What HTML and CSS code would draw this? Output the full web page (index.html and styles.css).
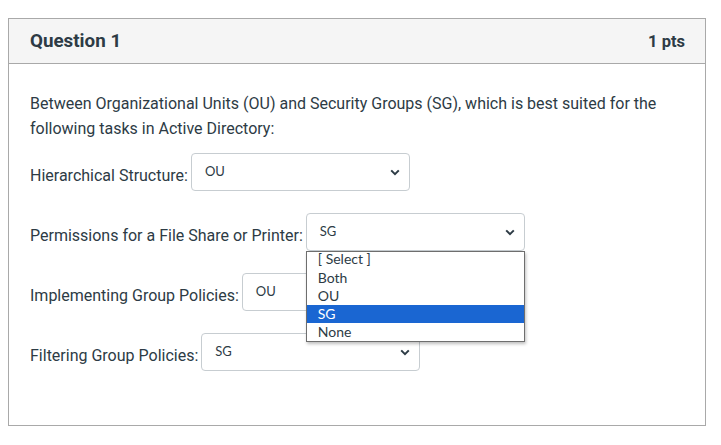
FILE: index.html
```html
<!DOCTYPE html>
<html lang="en">
<head>
<meta charset="utf-8">
<title>Question 1</title>
<link rel="stylesheet" href="styles.css">
</head>
<body>
<div class="card">
  <div class="card-header">
    <span class="title">Question 1</span>
    <span class="pts">1 pts</span>
  </div>
  <div class="card-body">
    <p class="prompt">Between Organizational Units (OU) and Security Groups (SG), which is best suited for the following tasks in Active Directory:</p>
    <div class="row">
      <span class="label">Hierarchical Structure:</span>
      <div class="select"><span class="value">OU</span><svg class="chev" width="10" height="7" viewBox="0 0 10 7"><path d="M1.2 1.4 L5 5.2 L8.8 1.4" fill="none" stroke="#2d3b45" stroke-width="2"/></svg></div>
    </div>
    <div class="row">
      <span class="label">Permissions for a File Share or Printer:</span>
      <div class="select-wrap">
        <div class="select"><span class="value">SG</span><svg class="chev" width="10" height="7" viewBox="0 0 10 7"><path d="M1.2 1.4 L5 5.2 L8.8 1.4" fill="none" stroke="#2d3b45" stroke-width="2"/></svg></div>
        <ul class="listbox">
          <li class="opt first">[ Select ]</li>
          <li class="opt">Both</li>
          <li class="opt">OU</li>
          <li class="opt selected">SG</li>
          <li class="opt">None</li>
        </ul>
      </div>
    </div>
    <div class="row">
      <span class="label">Implementing Group Policies:</span>
      <div class="select"><span class="value">OU</span><svg class="chev" width="10" height="7" viewBox="0 0 10 7"><path d="M1.2 1.4 L5 5.2 L8.8 1.4" fill="none" stroke="#2d3b45" stroke-width="2"/></svg></div>
    </div>
    <div class="row">
      <span class="label">Filtering Group Policies:</span>
      <div class="select"><span class="value">SG</span><svg class="chev" width="10" height="7" viewBox="0 0 10 7"><path d="M1.2 1.4 L5 5.2 L8.8 1.4" fill="none" stroke="#2d3b45" stroke-width="2"/></svg></div>
    </div>
  </div>
</div>
</body>
</html>
```
FILE: styles.css
```css
html, body {
  margin: 0;
  padding: 0;
  background: #ffffff;
}
body {
  padding: 18px 0 0 8px;
  font-family: Roboto, "Liberation Sans", sans-serif;
  color: #2d3b45;
}
.card {
  width: 698px;
  box-sizing: border-box;
  border: 1px solid #a9a9a9;
}
.card-header {
  height: 45px;
  box-sizing: border-box;
  background: #f5f5f5;
  border-bottom: 1px solid #a9a9a9;
  display: flex;
  justify-content: space-between;
  align-items: center;
  padding: 0 20px 0 21px;
  font-weight: 700;
}
.title {
  font-size: 18.8px;
}
.pts {
  font-size: 16.5px;
}
.card-body {
  padding: 27px 21px 54px 21px;
}
.prompt {
  margin: 0 0 12px 0;
  font-size: 16px;
  line-height: 25px;
}
.row {
  display: flex;
  align-items: center;
  margin-bottom: 22px;
}
.row:last-child {
  margin-bottom: 0;
}
.label {
  font-size: 16px;
  line-height: 20px;
  padding-top: 7px;
  margin-right: 3px;
}
.select-wrap {
  position: relative;
}
.select {
  width: 219px;
  height: 38px;
  box-sizing: border-box;
  border: 1px solid #c7cdd1;
  border-radius: 4px;
  background: #ffffff;
  display: flex;
  align-items: center;
  justify-content: space-between;
  padding: 0 9px 0 13px;
  font-family: Lato, "Liberation Sans", sans-serif;
  font-size: 13px;
}
.value {
  padding-bottom: 2px;
}
.chev {
  display: block;
}
.listbox {
  position: absolute;
  top: 38px;
  left: 0;
  width: 219px;
  box-sizing: border-box;
  margin: 0;
  padding: 0;
  list-style: none;
  background: #ffffff;
  border: 1px solid #6e6e6e;
  box-shadow: 1px 2px 3px rgba(0, 0, 0, 0.25);
  font-family: Lato, "Liberation Sans", sans-serif;
  font-size: 14px;
  color: #2d3b45;
  overflow: hidden;
}
.opt {
  height: 18px;
  line-height: 18px;
  padding-left: 11px;
}
.opt.first {
  line-height: 14px;
  height: 17px;
}
.opt.selected {
  background: #1a66d2;
  color: #ffffff;
}
```
